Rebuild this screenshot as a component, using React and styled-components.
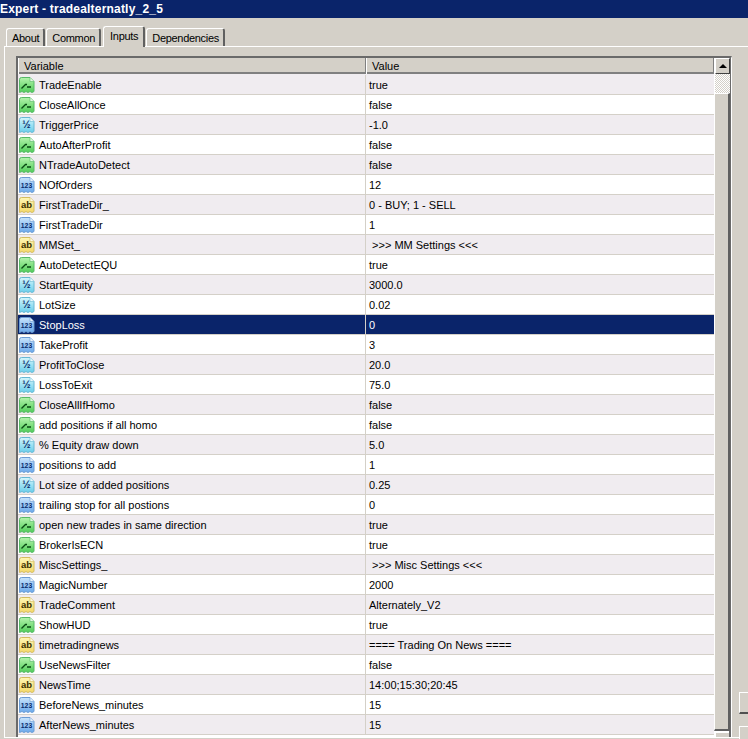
import React from 'react';
import styled, { createGlobalStyle } from 'styled-components';

const inputs = [
  ['TradeEnable', 'bool', 'true'],
  ['CloseAllOnce', 'bool', 'false'],
  ['TriggerPrice', 'double', '-1.0'],
  ['AutoAfterProfit', 'bool', 'false'],
  ['NTradeAutoDetect', 'bool', 'false'],
  ['NOfOrders', 'int', '12'],
  ['FirstTradeDir_', 'str', '0 - BUY; 1 - SELL'],
  ['FirstTradeDir', 'int', '1'],
  ['MMSet_', 'str', ' >>> MM Settings <<<'],
  ['AutoDetectEQU', 'bool', 'true'],
  ['StartEquity', 'double', '3000.0'],
  ['LotSize', 'double', '0.02'],
  ['StopLoss', 'int', '0'],
  ['TakeProfit', 'int', '3'],
  ['ProfitToClose', 'double', '20.0'],
  ['LossToExit', 'double', '75.0'],
  ['CloseAllIfHomo', 'bool', 'false'],
  ['add positions if all homo', 'bool', 'false'],
  ['% Equity draw down', 'double', '5.0'],
  ['positions to add', 'int', '1'],
  ['Lot size of added positions', 'double', '0.25'],
  ['trailing stop for all postions', 'int', '0'],
  ['open new trades in same direction', 'bool', 'true'],
  ['BrokerIsECN', 'bool', 'true'],
  ['MiscSettings_', 'str', ' >>> Misc Settings <<<'],
  ['MagicNumber', 'int', '2000'],
  ['TradeComment', 'str', 'Alternately_V2'],
  ['ShowHUD', 'bool', 'true'],
  ['timetradingnews', 'str', '==== Trading On News ===='],
  ['UseNewsFilter', 'bool', 'false'],
  ['NewsTime', 'str', '14:00;15:30;20:45'],
  ['BeforeNews_minutes', 'int', '15'],
  ['AfterNews_minutes', 'int', '15'],
];

const tabs = ['About', 'Common', 'Inputs', 'Dependencies'];

const iconColors = {
  bool: { top: '#b4f4ac', bottom: '#50cc58', line: '#58b868' },
  double: { top: '#d4f6fc', bottom: '#68cdea', line: '#68b8d4' },
  int: { top: '#c8e4fc', bottom: '#6aa8ea', line: '#6c9cd4' },
  str: { top: '#fff6b4', bottom: '#f4d868', line: '#d4bc60' },
};

const iconLabels = { double: '½', int: '123', str: 'ab' };

const TypeIcon = ({ kind }) => {
  const c = iconColors[kind];
  return (
    <svg width={16} height={16} viewBox="0 0 16 16" style={{ flexShrink: 0 }}>
      <defs>
        <linearGradient id={`fill-${kind}`} x1="0" y1="0" x2="0" y2="1">
          <stop offset="0" stopColor={c.top} />
          <stop offset="1" stopColor={c.bottom} />
        </linearGradient>
      </defs>
      <path
        d="M.5 2.500a2 2 0 0 1 2-2h8.500l4 4v10l-2 1-2-1-2 1-2-1-2 1-2-1-2.500 1z"
        fill={`url(#fill-${kind})`}
        stroke={c.line}
      />
      <path d="M11 .5v4h4" fill="#fff" fillOpacity=".7" stroke={c.line} strokeWidth=".6" />
      {kind === 'bool' ? (
        <path d="M2.500 11.500l4-4h1.500M8 10h4" fill="none" stroke="#0a4a14" strokeWidth="1.300" />
      ) : (
        <text
          x="7.500"
          y={11}
          textAnchor="middle"
          fontFamily="'Liberation Sans', sans-serif"
          fontWeight="700"
          fontSize={kind === 'str' ? 9.500 : kind === 'int' ? 6.800 : 10}
          fill={kind === 'str' ? '#3a3000' : '#0a2a6a'}
        >
          {iconLabels[kind]}
        </text>
      )}
    </svg>
  );
};

const GlobalStyle = createGlobalStyle`
  html, body {
    margin: 0;
    height: 739px;
    overflow: hidden;
    background: #d4d0c8;
  }

  body {
    font-family: 'Liberation Sans', Arial, sans-serif;
    font-size: 11px;
    color: #000;
  }
`;

const Window = styled.div`
  display: flex;
  flex-direction: column;
  width: 748px;
  height: 739px;
  overflow: hidden;
`;

const TitleBar = styled.div`
  height: 18px;
  flex-shrink: 0;
  line-height: 18px;
  background: #0a246a;
  color: #fff;
  font-weight: 700;
  font-size: 12px;
  letter-spacing: 0.2px;
  white-space: nowrap;
`;

const TabStrip = styled.div`
  display: flex;
  align-items: flex-end;
  gap: 1px;
  height: 29px;
  flex-shrink: 0;
  padding-left: 6px;
  margin-bottom: -1px;
  position: relative;
  z-index: 1;
`;

const Tab = styled.div`
  height: ${(p) => (p.$active ? 21 : 18)}px;
  margin: ${(p) => (p.$active ? '0 0 0 1px' : '0 0 1px 0')};
  padding: ${(p) => (p.$active ? '2px 5px 0 6px' : '2px 4px 0 5px')};
  box-sizing: border-box;
  background: #d4d0c8;
  border-top: 1px solid #fff;
  border-left: 1px solid #fff;
  border-right: 2px solid #606060;
  border-radius: 3px 3px 0 0;
  line-height: 14px;
  letter-spacing: -0.3px;
  white-space: nowrap;
`;

const Panel = styled.div`
  display: flex;
  flex: 1;
  min-height: 0;
  margin: 0 0 1px 4px;
  padding: 9px 0 0 11px;
  border-top: 1px solid #fff;
  border-left: 1px solid #fff;
  border-bottom: 1px solid #fff;
`;

const ListBox = styled.div`
  display: grid;
  grid-template-columns: 696px 17px;
  align-content: start;
  width: 716px;
  box-sizing: border-box;
  flex-shrink: 0;
  overflow: hidden;
  background: #fff;
  border-top: 2px solid #6a6a6a;
  border-left: 2px solid #6a6a6a;
  border-right: 1px solid #fff;
  box-shadow: inset -2px 0 0 #6a6a6a;
`;

const Table = styled.div`
  display: flex;
  flex-direction: column;
`;

const HeaderRow = styled.div`
  display: grid;
  grid-template-columns: 348px 1fr;
  height: 16px;
  box-sizing: border-box;
  background: #d4d0c8;
  border-bottom: 2px solid #808080;
  line-height: 16px;
`;

const HeaderCell = styled.div`
  padding-left: 6px;
  border-right: 1px solid #808080;
  box-shadow: inset 1px 0 0 #fff;
`;

const Row = styled.div`
  display: grid;
  grid-template-columns: 348px 1fr;
  grid-template-rows: 19px;
  height: 20px;
  flex-shrink: 0;
  box-sizing: border-box;
  border-bottom: 1px solid #d4d0c8;
  background: ${(p) => (p.$selected ? '#0a246a' : p.$tinted ? '#f0ecf0' : '#fff')};
  color: ${(p) => (p.$selected ? '#fff' : '#000')};

  ${HeaderRow} + & {
    height: 21px;
    padding-top: 1px;
  }
`;

const NameCell = styled.div`
  display: flex;
  align-items: center;
  gap: 4px;
  padding-left: 1px;
  border-right: 1px solid #d4d0c8;
  white-space: nowrap;
`;

const ValueCell = styled.div`
  padding-left: 3px;
  line-height: 21px;
  white-space: pre;
`;

const ScrollBar = styled.div`
  display: flex;
  flex-direction: column;
  height: 679px;
`;

const ScrollButton = styled.div`
  display: flex;
  align-items: center;
  justify-content: center;
  height: 16px;
  width: 15px;
  margin-left: 1px;
  flex-shrink: 0;
  box-sizing: border-box;
  background: #d4d0c8;
  border: 1px solid;
  border-color: #fff #404040 #404040 #fff;
`;

const Arrow = styled.div`
  width: 0;
  height: 0;
  border-left: 4px solid transparent;
  border-right: 4px solid transparent;
  border-bottom: 4px solid #000;
`;

const Track = styled.div`
  height: ${(p) => p.$height}px;
  margin-left: 1px;
  width: 15px;
  flex-shrink: 0;
  background-color: #fff;
  background-image: conic-gradient(#d4d0c8 25%, #fff 0 50%, #d4d0c8 0 75%, #fff 0);
  background-size: 2px 2px;
`;

const Thumb = styled.div`
  flex: 1;
  min-height: 0;
  width: 16px;
  box-sizing: border-box;
  background: #d4d0c8;
  border-left: 1px solid #fff;
  border-top: 1px solid #fff;
  border-right: 2px solid #606060;
  border-bottom: 2px solid #606060;
`;

const ScrollFoot = styled.div`
  height: 5px;
  width: 14px;
  margin-left: 1px;
  box-sizing: border-box;
  flex-shrink: 0;
  margin-top: 1px;
  background: #d4d0c8;
  border-left: 1px solid #fff;
  border-top: 1px solid #fff;
`;

const Gutter = styled.div`
  display: flex;
  flex-direction: column;
  gap: 12px;
  padding: 636px 0 0 7px;
`;

const DialogButton = styled.div`
  width: 30px;
  height: 22px;
  flex-shrink: 0;
  box-sizing: border-box;
  background: #d4d0c8;
  border-top: 1px solid #fff;
  border-left: 1px solid #fff;
  border-bottom: 2px solid #505050;
`;

const App = () => {
  return (
    <Window>
      <GlobalStyle />
      <TitleBar>Expert - tradealternatly_2_5</TitleBar>
      <TabStrip>
        {tabs.map((tab) => (
          <Tab key={tab} $active={tab === 'Inputs'}>
            {tab}
          </Tab>
        ))}
      </TabStrip>
      <Panel>
        <ListBox>
          <Table>
            <HeaderRow>
              <HeaderCell>Variable</HeaderCell>
              <HeaderCell>Value</HeaderCell>
            </HeaderRow>
            {inputs.map(([name, kind, value], i) => (
              <Row key={name} $tinted={i % 2 === 0} $selected={name === 'StopLoss'}>
                <NameCell>
                  <TypeIcon kind={kind} />
                  {name}
                </NameCell>
                <ValueCell>{value}</ValueCell>
              </Row>
            ))}
          </Table>
          <ScrollBar>
            <ScrollButton>
              <Arrow />
            </ScrollButton>
            <Track $height={19} />
            <Thumb />
            <ScrollFoot />
          </ScrollBar>
        </ListBox>
        <Gutter>
          <DialogButton />
          <DialogButton />
        </Gutter>
      </Panel>
    </Window>
  );
};

export default App;
